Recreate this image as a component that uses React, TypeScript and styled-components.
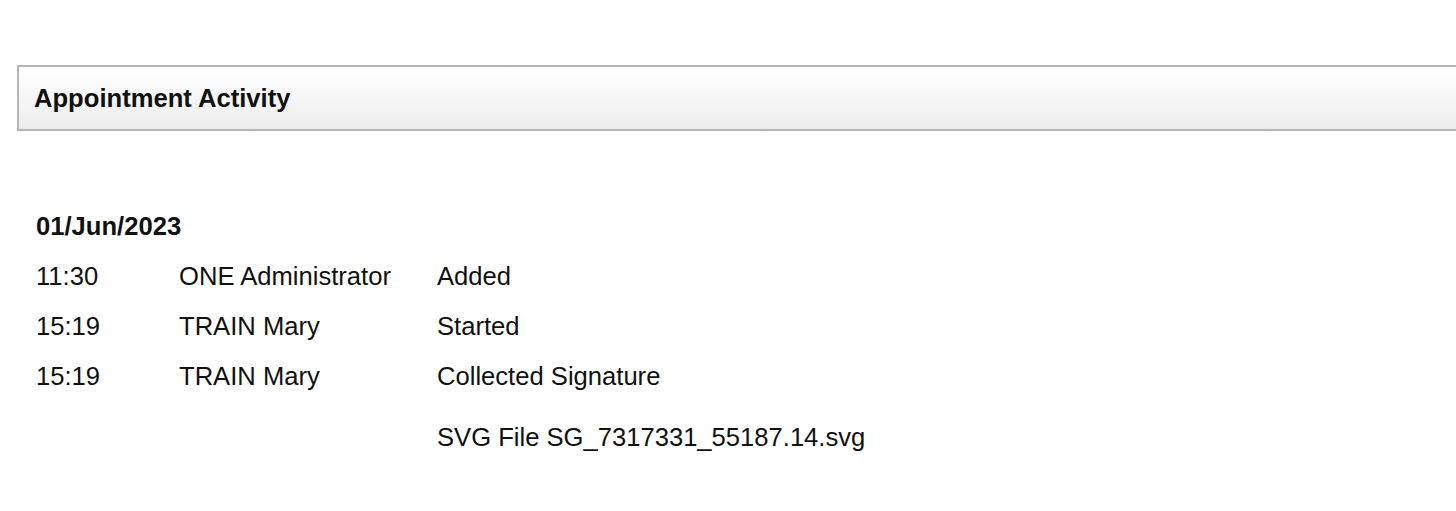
import styled, { createGlobalStyle } from 'styled-components';

const GlobalStyle = createGlobalStyle`
  html, body {
    margin: 0;
    padding: 0;
    background: #fff;
    overflow: hidden;
  }
  body {
    font-family: "Liberation Sans", Arial, sans-serif;
    color: #111;
  }
`;

const Page = styled.div`
  padding: 65px 0 0 17px;
`;

const PanelHeader = styled.div`
  display: flex;
  align-items: center;
  height: 62px;
  margin-right: -20px;
  padding-left: 15px;
  border: 2px solid #b5b5b5;
  background: linear-gradient(to bottom, #ffffff 0%, #f6f6f6 50%, #ececec 100%);
`;

const Title = styled.h2`
  margin: 0;
  font-size: 25.6px;
  font-weight: bold;
`;

const Activity = styled.div`
  margin-top: 70px;
  padding-left: 19px;
  font-size: 25.6px;
`;

const DateHeading = styled.div`
  font-weight: bold;
  line-height: 50px;
`;

const Row = styled.div<{ $extraTop?: number }>`
  display: grid;
  grid-template-columns: 143px 258px auto;
  line-height: 50px;
  margin-top: ${(p) => p.$extraTop ?? 0}px;
`;

const Cell = styled.span`
  white-space: nowrap;
`;

const entries = [
  { time: '11:30', who: 'ONE Administrator', what: 'Added' },
  { time: '15:19', who: 'TRAIN Mary', what: 'Started' },
  { time: '15:19', who: 'TRAIN Mary', what: 'Collected Signature' },
];

export default function App() {
  return (
    <>
      <GlobalStyle />
      <Page>
        <PanelHeader>
          <Title>Appointment Activity</Title>
        </PanelHeader>
        <Activity>
          <DateHeading>01/Jun/2023</DateHeading>
          {entries.map((e, i) => (
            <Row key={i}>
              <Cell>{e.time}</Cell>
              <Cell>{e.who}</Cell>
              <Cell>{e.what}</Cell>
            </Row>
          ))}
          <Row $extraTop={11}>
            <Cell />
            <Cell />
            <Cell>SVG File SG_7317331_55187.14.svg</Cell>
          </Row>
        </Activity>
      </Page>
    </>
  );
}
